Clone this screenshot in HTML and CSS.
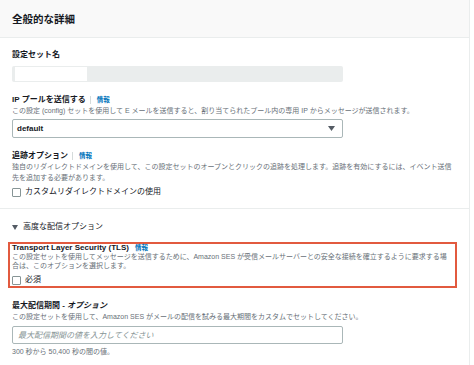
FILE: index.html
```html
<!DOCTYPE html>
<html lang="ja">
<head>
    <meta charset="UTF-8">
    <meta name="viewport" content="width=device-width, initial-scale=1.0">
    <title>全般的な詳細</title>
    <link rel="stylesheet" href="styles.css">
</head>
<body>
    <div class="card">
        <header class="card-header">
            <h2>全般的な詳細</h2>
        </header>

        <div class="card-body">
            <div class="field first">
                <div class="label">設定セット名</div>
                <div class="readonly-input"><span class="redacted"></span></div>
            </div>

            <div class="field">
                <div class="label">IP プールを送信する <span class="sep"></span><a class="info">情報</a></div>
                <div class="desc">この設定 (config) セットを使用して E メールを送信すると、割り当てられたプール内の専用 IP からメッセージが送信されます。</div>
                <div class="select">
                    <span>default</span>
                    <svg class="caret" width="7" height="5" viewBox="0 0 7 5"><path d="M0 0H7L3.5 5Z" fill="#545b64"/></svg>
                </div>
            </div>

            <div class="field">
                <div class="label">追跡オプション <span class="sep"></span><a class="info">情報</a></div>
                <div class="desc">独自のリダイレクトドメインを使用して、この設定セットのオープンとクリックの追跡を処理します。追跡を有効にするには、イベント送信先を追加する必要があります。</div>
                <label class="check"><span class="box"></span>カスタムリダイレクトドメインの使用</label>
            </div>
        </div>

        <div class="divider"></div>

        <div class="card-body">
            <div class="expander">
                <svg class="tri" width="6" height="5" viewBox="0 0 6 5"><path d="M0 0H6L3 5Z" fill="#545b64"/></svg>
                高度な配信オプション
            </div>

            <div class="highlight">
                <div class="label tight">Transport Layer Security (TLS) <a class="info">情報</a></div>
                <div class="desc tight">この設定セットを使用してメッセージを送信するために、Amazon SES が受信メールサーバーとの安全な接続を確立するように要求する場合は、このオプションを選択します。</div>
                <label class="check"><span class="box"></span>必須</label>
            </div>

            <div class="field">
                <div class="label">最大配信期間 - <i>オプション</i></div>
                <div class="desc">この設定セットを使用して、Amazon SES がメールの配信を試みる最大期間をカスタムでセットしてください。</div>
                <input class="text-input" type="text" placeholder="最大配信期間の値を入力してください">
                <div class="hint">300 秒から 50,400 秒の間の値。</div>
            </div>
        </div>
    </div>
</body>
</html>
```

FILE: styles.css
```css
:root {
    --text-color: #16191f;
    --desc-color: #687078;
    --link-color: #0073bb;
    --border-color: #eaeded;
    --input-border: #aab7b8;
    --highlight-color: #e25a3f;
}
body {
    margin: 0;
    background: #ffffff;
    font-family: "Liberation Sans", "Noto Sans CJK JP", sans-serif;
    color: var(--text-color);
}
.card {
    width: 469px;
    min-height: 365px;
    border-right: 1px solid var(--border-color);
    background: #ffffff;
}
.card-header {
    height: 37px;
    background: #f9f9f9;
    border-bottom: 1px solid var(--border-color);
    padding: 0 12px;
    display: flex;
    align-items: center;
}
.card-header h2 {
    margin: 0;
    font-size: 10.5px;
    font-weight: bold;
    line-height: 14px;
    padding-top: 1px;
}
.card-body {
    padding: 0 15px 0 12px;
}
.field {
    margin-top: 13px;
}
.field.first {
    margin-top: 11px;
}
.label {
    font-size: 8px;
    font-weight: bold;
    line-height: 10px;
    display: flex;
    align-items: center;
    white-space: nowrap;
}
.label i {
    margin-left: 2px;
}
.first .label {
    line-height: 12px;
}
.sep {
    display: inline-block;
    width: 1px;
    height: 8px;
    background: #d5dbdb;
    margin: 0 6px 0 4px;
}
.info {
    color: var(--link-color);
    font-size: 6.5px;
    font-weight: bold;
}
.highlight .info {
    margin-left: 6px;
}
.desc {
    font-size: 7px;
    line-height: 11px;
    color: var(--desc-color);
}
.readonly-input {
    margin-top: 5px;
    width: 331px;
    height: 16px;
    background: #eaeded;
    border-radius: 2px;
    display: flex;
    align-items: center;
    padding-left: 3px;
    box-sizing: border-box;
}
.redacted {
    width: 72px;
    height: 14px;
    background: #ffffff;
}
.select {
    margin-top: 3px;
    width: 331px;
    height: 19px;
    box-sizing: border-box;
    border: 1px solid var(--input-border);
    border-radius: 2px;
    display: flex;
    align-items: center;
    justify-content: space-between;
    padding: 0 7px 0 4px;
    font-size: 8px;
    font-weight: bold;
}
.check {
    display: flex;
    align-items: center;
    gap: 4px;
    font-size: 8px;
    line-height: 12px;
    margin-top: 3px;
}
.box {
    width: 7px;
    height: 7px;
    border: 1px solid #879596;
    border-radius: 1px;
    background: #ffffff;
}
.divider {
    margin-top: 10px;
    height: 1px;
    background: var(--border-color);
}
.expander {
    margin-top: 12px;
    display: flex;
    align-items: center;
    gap: 5px;
    font-size: 8px;
    line-height: 12px;
    color: #16191f;
}
.highlight {
    margin: 9px -3px 0 -4px;
    border: 2px solid var(--highlight-color);
    padding: 0 2px 0 2px;
    height: 46px;
    box-sizing: border-box;
}
.label.tight {
    line-height: 8px;
}
.desc.tight {
    line-height: 9px;
}
.highlight .check {
    margin-top: 4px;
}
.text-input {
    display: block;
    margin: 4px 0 0 0;
    width: 331px;
    height: 18px;
    box-sizing: border-box;
    border: 1px solid var(--input-border);
    border-radius: 2px;
    padding: 0 5px;
    font-family: "Liberation Sans", "Noto Sans CJK JP", sans-serif;
    font-size: 8px;
    outline: none;
}
.text-input::placeholder {
    color: #879596;
    font-style: italic;
}
.hint {
    margin-top: 3px;
    font-size: 7px;
    line-height: 10px;
    color: var(--desc-color);
}
```
